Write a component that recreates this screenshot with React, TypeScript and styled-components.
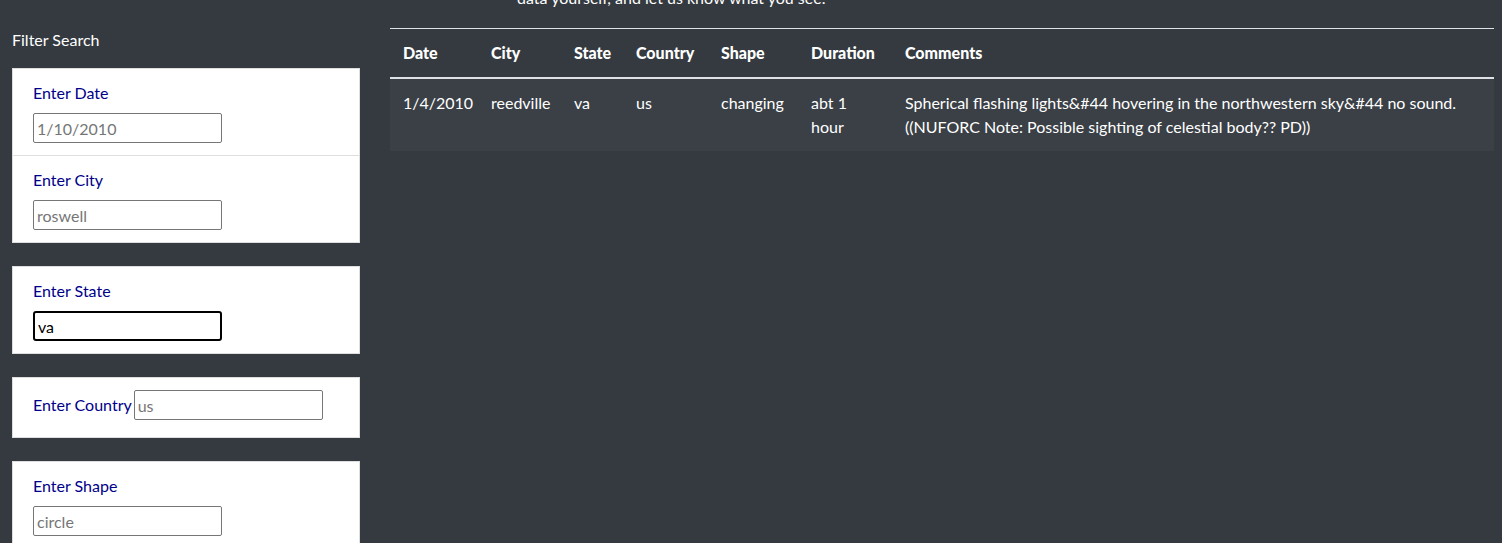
import React from "react";
import styled, { createGlobalStyle } from "styled-components";

const GlobalStyle = createGlobalStyle`
  html, body {
    margin: 0;
    padding: 0;
    background: #343a40;
    overflow: hidden;
  }
  body {
    font-family: "Segoe UI", Lato, "Noto Sans", "Liberation Sans", sans-serif;
    font-size: 16px;
    line-height: 24px;
    color: #fff;
  }
`;

const Page = styled.div`
  display: flex;
  align-items: flex-start;
  padding-left: 12px;
`;

const Sidebar = styled.aside`
  width: 348px;
  flex-shrink: 0;
  padding-top: 28px;
`;

const SideTitle = styled.div`
  color: #fff;
  margin-bottom: 16px;
`;

const Group = styled.ul`
  list-style: none;
  margin: 0 0 23px;
  padding: 0;
  background: #fff;
  border: 1px solid #dedede;
`;

const Item = styled.li<{ $inline?: boolean }>`
  display: flex;
  flex-direction: ${(p) => (p.$inline ? "row" : "column")};
  align-items: ${(p) => (p.$inline ? "center" : "flex-start")};
  gap: ${(p) => (p.$inline ? "2px" : "8px")};
  padding: ${(p) => (p.$inline ? "12px 20px 17px" : "12px 20px")};
  & + & {
    border-top: 1px solid #dedede;
  }
`;

const Label = styled.label`
  color: #00008b;
`;

const Field = styled.input<{ $active?: boolean }>`
  box-sizing: border-box;
  width: 189px;
  height: 30px;
  padding: 1px 3px;
  font-family: inherit;
  font-size: 16px;
  color: #000;
  border: ${(p) => (p.$active ? "2px solid #000" : "1px solid #767676")};
  border-radius: ${(p) => (p.$active ? "3px" : "2px")};
  outline: none;
  background: #fff;
  &::placeholder {
    color: #767676;
  }
`;

const Main = styled.main`
  width: 1104px;
  margin-left: 30px;
`;

const Intro = styled.p`
  margin: -14px 0 18px 127px;
  color: #fff;
`;

const Table = styled.table`
  width: 100%;
  border-collapse: collapse;
  color: #fff;
  table-layout: fixed;
`;

const Th = styled.th<{ $w?: number }>`
  width: ${(p) => (p.$w ? `${p.$w - 25}px` : "auto")};
  text-align: left;
  font-weight: 900;
  padding: 12px 12px 12px 13px;
  border-top: 1px solid #dee2e6;
  border-bottom: 2px solid #dee2e6;
`;

const Row = styled.tr`
  background: rgba(255, 255, 255, 0.03);
`;

const Td = styled.td`
  vertical-align: top;
  padding: 12px 12px 12px 13px;
`;

const columns: [string, number?][] = [
  ["Date", 88],
  ["City", 83],
  ["State", 62],
  ["Country", 85],
  ["Shape", 90],
  ["Duration", 94],
  ["Comments"],
];

const sighting = [
  "1/4/2010",
  "reedville",
  "va",
  "us",
  "changing",
  "abt 1 hour",
  "Spherical flashing lights&#44 hovering in the northwestern sky&#44 no sound. ((NUFORC Note: Possible sighting of celestial body?? PD))",
];

export default function App() {
  return (
    <>
      <GlobalStyle />
      <Page>
        <Sidebar>
          <SideTitle>Filter Search</SideTitle>
          <Group>
            <Item>
              <Label htmlFor="datetime">Enter Date</Label>
              <Field id="datetime" placeholder="1/10/2010" />
            </Item>
            <Item>
              <Label htmlFor="city">Enter City</Label>
              <Field id="city" placeholder="roswell" />
            </Item>
          </Group>
          <Group>
            <Item>
              <Label htmlFor="state">Enter State</Label>
              <Field id="state" defaultValue="va" $active />
            </Item>
          </Group>
          <Group>
            <Item $inline>
              <Label htmlFor="country">Enter Country</Label>
              <Field id="country" placeholder="us" />
            </Item>
          </Group>
          <Group>
            <Item>
              <Label htmlFor="shape">Enter Shape</Label>
              <Field id="shape" placeholder="circle" />
            </Item>
          </Group>
        </Sidebar>
        <Main>
          <Intro>data yourself, and let us know what you see.</Intro>
          <Table>
            <thead>
              <tr>
                {columns.map(([name, w]) => (
                  <Th key={name} $w={w}>
                    {name}
                  </Th>
                ))}
              </tr>
            </thead>
            <tbody>
              <Row>
                {sighting.map((v, i) => (
                  <Td key={i}>{v}</Td>
                ))}
              </Row>
            </tbody>
          </Table>
        </Main>
      </Page>
    </>
  );
}
